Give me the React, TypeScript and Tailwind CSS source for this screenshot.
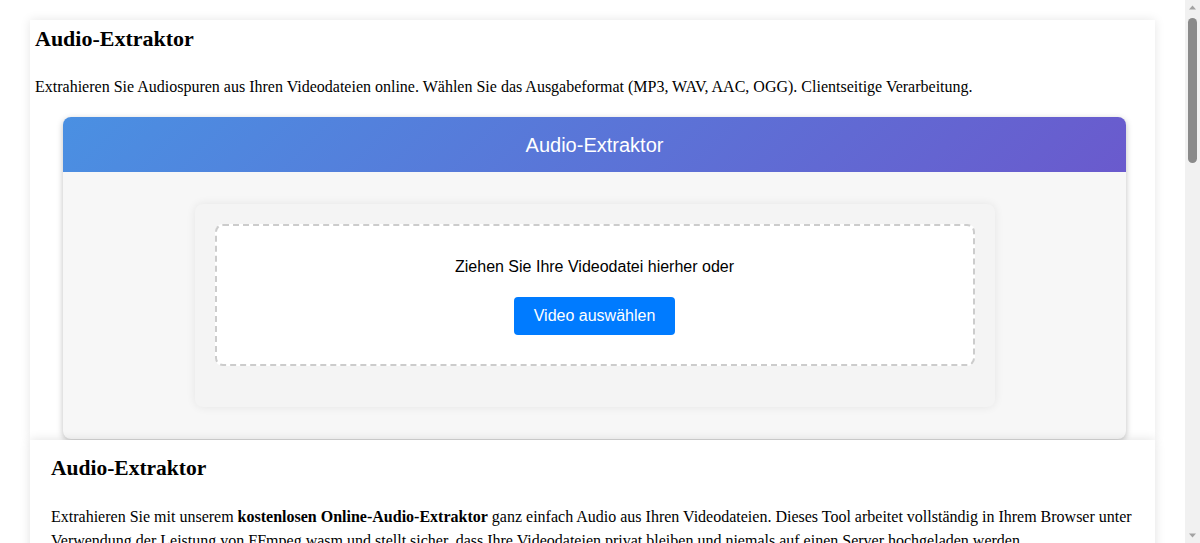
import React from 'react';

const serif = { fontFamily: '"Liberation Serif", "Times New Roman", serif' };
const sans = { fontFamily: '"Liberation Sans", Arial, sans-serif' };

function ToolCard() {
  return (
    <div className="ml-[28px] mt-[21px] w-[1063px] overflow-hidden rounded-lg bg-[#f7f7f7] shadow-[0_2px_6px_rgba(0,0,0,0.25)]" style={sans}>
      <div className="flex h-[55px] items-center justify-center bg-[linear-gradient(135deg,#4a90e2,#6a5acd)]">
        <h2 className="text-[20px] font-normal text-white">Audio-Extraktor</h2>
      </div>
      <div className="px-8 py-8">
        <div className="mx-auto w-[800px] rounded-lg bg-[#f4f4f4] px-5 pb-[41px] pt-5 shadow-[0_0_10px_rgba(0,0,0,0.08)]">
          <div className="flex flex-col items-center rounded-lg border-2 border-dashed border-[#cccccc] bg-white pb-[29px] pt-8">
            <p className="text-[16px] leading-[18px] text-black">Ziehen Sie Ihre Videodatei hierher oder</p>
            <button className="mt-[21px] h-[38px] rounded bg-[#007bff] px-5 text-[16px] text-white">
              Video auswählen
            </button>
          </div>
        </div>
      </div>
    </div>
  );
}

function Scrollbar() {
  return (
    <div className="flex h-full w-[15px] shrink-0 flex-col items-center bg-[#f1f1f1]">
      <svg width="15" height="15" viewBox="0 0 15 15" className="shrink-0">
        <path d="M4 9.5 L7.5 5.5 L11 9.5 Z" fill="#a3a3a3" />
      </svg>
      <div className="mt-[3px] h-[145px] w-[9px] rounded-full bg-[#8a8a8a]" />
      <div className="flex-1" />
      <svg width="15" height="15" viewBox="0 0 15 15" className="shrink-0">
        <path d="M4 5.5 L7.5 9.5 L11 5.5 Z" fill="#a3a3a3" />
      </svg>
    </div>
  );
}

export default function App() {
  return (
    <div className="flex h-screen overflow-hidden bg-white text-black" style={serif}>
      <main className="flex-1 overflow-hidden pt-5">
        <div className="mx-auto w-[1125px] bg-white px-[5px] pt-[6px] shadow-[0_0_10px_rgba(0,0,0,0.1)]">
          <h1 className="text-[22px] font-bold leading-[26px]">Audio-Extraktor</h1>
          <p className="mt-[26px] text-[16px] leading-[18px]">
            Extrahieren Sie Audiospuren aus Ihren Videodateien online. Wählen Sie das Ausgabeformat (MP3, WAV, AAC, OGG). Clientseitige Verarbeitung.
          </p>
          <ToolCard />
          <div className="h-px" />
        </div>

        <div className="mx-auto w-[1125px] bg-white pb-10 pl-[21px] pr-5 pt-[17px] shadow-[0_0_10px_rgba(0,0,0,0.12)]">
          <h2 className="text-[21.5px] font-bold leading-[23px]">Audio-Extraktor</h2>
          <p className="mt-[25px] text-[16px] leading-6">
            Extrahieren Sie mit unserem <strong>kostenlosen Online-Audio-Extraktor</strong> ganz einfach Audio aus Ihren Videodateien. Dieses Tool arbeitet vollständig in Ihrem Browser unter Verwendung der Leistung von FFmpeg.wasm und stellt sicher, dass Ihre Videodateien privat bleiben und niemals auf einen Server hochgeladen werden.
          </p>
        </div>
      </main>
      <Scrollbar />
    </div>
  );
}
